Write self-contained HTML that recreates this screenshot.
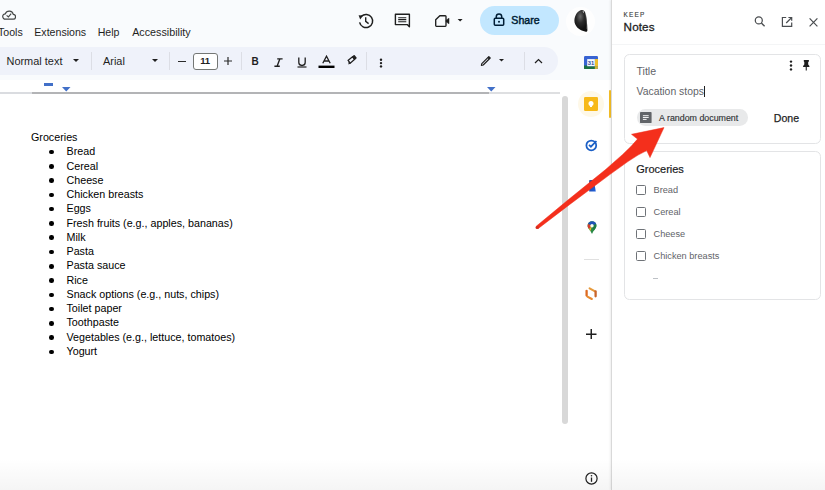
<!DOCTYPE html>
<html><head><meta charset="utf-8">
<style>
*{margin:0;padding:0;box-sizing:border-box}
html,body{width:825px;height:490px;overflow:hidden;background:#fff;font-family:"Liberation Sans",sans-serif;color:#1f1f1f}
.a{position:absolute}
#hdr{left:0;top:0;width:612px;height:80px;background:#f9fbfd}
#pill{left:-20px;top:47px;width:578px;height:28px;border-radius:14px;background:#eff2fa}
.menu{top:26px;font-size:10.6px;color:#1f1f1f;white-space:nowrap}
.tb{font-size:10.95px;color:#1f1f1f;white-space:nowrap}
.sep{width:1px;background:#dcdee5}
.doc{font-size:10.72px;color:#000;white-space:nowrap;line-height:14.27px}
.bul{width:4.6px;height:4.6px;border-radius:50%;background:#000}
#strip{left:570px;top:0;width:42px;height:490px}
#panel{left:611px;top:0;width:214px;height:490px;background:#fff;border-left:1px solid #d9d9d9;box-shadow:-1.5px 0 2px rgba(0,0,0,0.07)}
.card{border:1px solid #e3e4e6;border-radius:5.5px;background:#fff}
.ck{width:10px;height:10px;border:1.3px solid #6f7378;border-radius:1.5px}
.it{font-size:9.2px;color:#5f6368;white-space:nowrap}
</style></head><body>
<div class="a" id="hdr"></div>
<div class="a" id="pill"></div>

<!-- cloud icon -->
<svg class="a" style="left:2px;top:10px" width="14" height="10" viewBox="0 0 14 10">
<path d="M3.5 9.2 H11 A2.4 2.4 0 0 0 11.3 4.4 A4.2 4.2 0 0 0 3.3 3.8 A2.7 2.7 0 0 0 3.5 9.2 Z" fill="none" stroke="#444746" stroke-width="1.2"/>
<path d="M4.6 5.4 L6.4 6.9 L9.2 3.6" fill="none" stroke="#444746" stroke-width="1.15"/>
</svg>

<div class="a menu" style="left:-2px">Tools</div>
<div class="a menu" style="left:34.3px">Extensions</div>
<div class="a menu" style="left:97.7px">Help</div>
<div class="a menu" style="left:132.2px;font-size:10.75px">Accessibility</div>

<!-- header icons -->
<svg class="a" style="left:356px;top:11px" width="20" height="20" viewBox="0 0 20 20">
<path d="M3.6 11.4 A6.6 6.6 0 1 0 5.4 5.3" fill="none" stroke="#1f1f1f" stroke-width="1.5"/>
<path d="M2.6 4.2 L7.2 4.6 L4.2 8.4 Z" fill="#1f1f1f"/>
<path d="M9.7 6.2 V10.4 L12.6 12.6" fill="none" stroke="#1f1f1f" stroke-width="1.4"/>
</svg>
<svg class="a" style="left:394px;top:13px" width="17" height="16" viewBox="0 0 17 16">
<path d="M1.4 1.2 H15.4 V13.8 L13.2 11.6 H1.4 Z" fill="none" stroke="#1f1f1f" stroke-width="1.4" stroke-linejoin="round"/>
<path d="M4.2 4.7 H12.3 M4.2 6.6 H12.3 M4.2 8.8 H12.3" stroke="#1f1f1f" stroke-width="1.05"/>
</svg>
<svg class="a" style="left:433px;top:13px" width="32" height="16" viewBox="0 0 32 16">
<path d="M6.8 2.7 H12.3 A0.7 0.7 0 0 1 13 3.4 V12.6 A0.7 0.7 0 0 1 12.3 13.3 H3.4 A0.7 0.7 0 0 1 2.7 12.6 V6.8 Z" fill="none" stroke="#1f1f1f" stroke-width="1.35" stroke-linejoin="round"/>
<path d="M13 7.2 L16 5.2 V10.8 L13 8.8 Z" fill="#1f1f1f" stroke="#1f1f1f" stroke-width="0.5" stroke-linejoin="round"/>
<path d="M24.6 6 H29.6 L27.1 8.4 Z" fill="#1f1f1f"/>
</svg>

<!-- share -->
<div class="a" style="left:480px;top:6px;width:79px;height:29px;border-radius:15px;background:#c2e7ff"></div>
<svg class="a" style="left:493px;top:13px" width="12" height="13" viewBox="0 0 12 13">
<rect x="1.3" y="5.2" width="9.4" height="7" rx="1" fill="none" stroke="#001d35" stroke-width="1.5"/>
<path d="M3.3 5.2 V3.6 A2.7 2.7 0 0 1 8.7 3.6 V5.2" fill="none" stroke="#001d35" stroke-width="1.5"/>
<circle cx="6" cy="8.7" r="1" fill="#001d35"/>
</svg>
<div class="a" style="left:511.3px;top:13.6px;font-size:10.6px;-webkit-text-stroke:0.45px #001d35;color:#001d35;letter-spacing:0.05px">Share</div>

<!-- avatar -->
<div class="a" style="left:566px;top:7px;width:29px;height:29px;border-radius:50%;background:#fefefe"></div>
<svg class="a" style="left:572.5px;top:9px" width="16" height="25" viewBox="0 0 16 25">
<defs><radialGradient id="av" cx="0.45" cy="0.3" r="0.6"><stop offset="0" stop-color="#6a6a6a"/><stop offset="0.5" stop-color="#2a2a2a"/><stop offset="1" stop-color="#111"/></radialGradient></defs>
<path d="M9 0.9 C10.6 0.9 11.6 1.8 12.2 3.6 C13.4 8 14.2 14 14.4 20.8 C14.5 22.4 13.8 23 12.8 22.8 C6 21.6 1.3 17 1.4 11.6 C1.5 6.2 5 1 9 0.9 Z" fill="url(#av)"/>
<path d="M9.6 1.8 C10.6 2 11.2 3 11 4.2 C10.2 4 9.6 3 9.6 1.8Z" fill="#bdbdbd"/>
<path d="M12.6 6 C13.4 10 13.8 15 13.6 20" fill="none" stroke="#555" stroke-width="0.6"/>
</svg>

<!-- toolbar -->
<div class="a tb" style="left:6.5px;top:54.5px">Normal text</div>
<svg class="a" style="left:73.2px;top:59px" width="6" height="3"><path d="M0 0 H6 L3 3Z" fill="#1f1f1f"/></svg>
<div class="a sep" style="left:91px;top:52px;height:18px"></div>
<div class="a tb" style="left:103px;top:54.5px">Arial</div>
<svg class="a" style="left:151.8px;top:59px" width="6" height="3"><path d="M0 0 H6 L3 3Z" fill="#1f1f1f"/></svg>
<div class="a sep" style="left:169px;top:52px;height:18px"></div>
<div class="a" style="left:177.5px;top:60.5px;width:8px;height:1.2px;background:#2b2b2b"></div>
<div class="a" style="left:192.5px;top:52.5px;width:25px;height:17px;border:1px solid #747775;border-radius:3px;background:#fff"></div>
<div class="a tb" style="left:192.5px;top:55px;width:25px;text-align:center;font-size:9.6px;font-weight:bold;letter-spacing:-0.3px">11</div>
<svg class="a" style="left:224px;top:57px" width="8" height="8"><path d="M4 0V8M0 4H8" stroke="#2b2b2b" stroke-width="1.2"/></svg>
<div class="a sep" style="left:240.5px;top:52px;height:18px"></div>
<div class="a tb" style="left:251.6px;top:56.4px;font-weight:bold;font-size:10px">B</div>
<svg class="a" style="left:274px;top:57.5px" width="9" height="9" viewBox="0 0 9 9"><path d="M3.2 0.8H8.6M0.4 8.2H5.8M5.9 0.8L3.1 8.2" stroke="#1f1f1f" stroke-width="1.35"/></svg>
<svg class="a" style="left:297px;top:57px" width="10" height="11" viewBox="0 0 10 11"><path d="M1.8 0.5V5.3A3.2 3.2 0 0 0 8.2 5.3V0.5" fill="none" stroke="#1f1f1f" stroke-width="1.3"/><path d="M0.5 10H9.5" stroke="#1f1f1f" stroke-width="1.2"/></svg>
<svg class="a" style="left:318px;top:55px" width="17" height="13" viewBox="0 0 17 13"><path d="M4.8 8.2L8.5 1.2L12.2 8.2M6 6H11" fill="none" stroke="#1f1f1f" stroke-width="1.3"/><rect x="0.5" y="10.6" width="16" height="2.4" fill="#000"/></svg>
<svg class="a" style="left:345px;top:53px" width="14" height="13" viewBox="0 0 14 13"><g transform="translate(2.2,10.4) rotate(-40)"><rect x="2.6" y="-1.7" width="5.6" height="3.4" fill="none" stroke="#1f1f1f" stroke-width="1.2"/><rect x="7.8" y="-2.2" width="3.2" height="4.4" rx="0.8" fill="#1f1f1f"/><path d="M0.2 1.7 L2.6 -1 L2.6 2.2 Z" fill="#1f1f1f"/></g></svg>
<div class="a sep" style="left:366px;top:52px;height:18px"></div>
<svg class="a" style="left:379px;top:57.5px" width="4" height="10"><circle cx="2" cy="1.8" r="1.2" fill="#1f1f1f"/><circle cx="2" cy="5.1" r="1.2" fill="#1f1f1f"/><circle cx="2" cy="8.4" r="1.2" fill="#1f1f1f"/></svg>
<svg class="a" style="left:480px;top:55px" width="12" height="12" viewBox="0 0 12 12"><path d="M1.4 10.4 L1.8 8.6 L8.8 1.6 L10.2 3 L3.2 10 Z" fill="none" stroke="#1f1f1f" stroke-width="1.2" stroke-linejoin="round"/><path d="M8 2.4 L9.4 3.8" stroke="#1f1f1f" stroke-width="1.6"/></svg>
<svg class="a" style="left:499px;top:59.4px" width="5" height="3"><path d="M0 0 H5 L2.5 2.5Z" fill="#1f1f1f"/></svg>
<div class="a sep" style="left:524px;top:52px;height:18px"></div>
<svg class="a" style="left:534px;top:58px" width="9" height="6" viewBox="0 0 9 6"><path d="M1 5 L4.5 1.6 L8 5" fill="none" stroke="#1f1f1f" stroke-width="1.25"/></svg>

<!-- ruler -->
<div class="a" style="left:0;top:92px;width:32px;height:2px;background:#dadce0"></div>
<div class="a" style="left:32px;top:92px;width:456.5px;height:2px;background:#b3b4b6"></div>
<div class="a" style="left:488.5px;top:92px;width:71.5px;height:2px;background:#dedfe1"></div>
<div class="a" style="left:44px;top:83px;width:9px;height:3px;background:#4270c8"></div>
<svg class="a" style="left:62px;top:86.5px" width="9" height="5"><path d="M0 0H8.5L4.25 4.5Z" fill="#4270c8"/></svg>
<svg class="a" style="left:487px;top:86.5px" width="9" height="5"><path d="M0 0H8.5L4.25 4.5Z" fill="#4270c8"/></svg>

<!-- scrollbar -->
<div class="a" style="left:561.8px;top:96px;width:6px;height:328px;border-radius:3px;background:#d8d8d8"></div>

<!-- doc text -->
<div class="a doc" style="left:31px;top:130px">Groceries</div>
<div class="a" style="left:66.5px;top:144.3px">
<div class="doc">Bread</div>
<div class="doc">Cereal</div>
<div class="doc">Cheese</div>
<div class="doc">Chicken breasts</div>
<div class="doc">Eggs</div>
<div class="doc">Fresh fruits (e.g., apples, bananas)</div>
<div class="doc">Milk</div>
<div class="doc">Pasta</div>
<div class="doc">Pasta sauce</div>
<div class="doc">Rice</div>
<div class="doc">Snack options (e.g., nuts, chips)</div>
<div class="doc">Toilet paper</div>
<div class="doc">Toothpaste</div>
<div class="doc">Vegetables (e.g., lettuce, tomatoes)</div>
<div class="doc">Yogurt</div>
</div>
<div class="a bul" style="left:49.4px;top:149.80px"></div>
<div class="a bul" style="left:49.4px;top:164.07px"></div>
<div class="a bul" style="left:49.4px;top:178.34px"></div>
<div class="a bul" style="left:49.4px;top:192.61px"></div>
<div class="a bul" style="left:49.4px;top:206.88px"></div>
<div class="a bul" style="left:49.4px;top:221.15px"></div>
<div class="a bul" style="left:49.4px;top:235.42px"></div>
<div class="a bul" style="left:49.4px;top:249.69px"></div>
<div class="a bul" style="left:49.4px;top:263.96px"></div>
<div class="a bul" style="left:49.4px;top:278.23px"></div>
<div class="a bul" style="left:49.4px;top:292.50px"></div>
<div class="a bul" style="left:49.4px;top:306.77px"></div>
<div class="a bul" style="left:49.4px;top:321.04px"></div>
<div class="a bul" style="left:49.4px;top:335.31px"></div>
<div class="a bul" style="left:49.4px;top:349.58px"></div>


<!-- side strip icons -->
<svg class="a" style="left:584px;top:55.8px" width="14" height="13.2" viewBox="0 0 14 13.2">
<rect x="0" y="0" width="14" height="13.2" rx="1.2" fill="#3863d2"/>
<path d="M0 9.4 H3.2 V10.2 H11.2 V13.2 H1.2 Q0 13.2 0 12 Z" fill="#1d7040"/>
<rect x="10.8" y="3" width="3.2" height="7.4" fill="#efc02e"/>
<path d="M10.8 10.2 H14 V11.6 Q14 13.2 12.4 13.2 H10.8 Z" fill="#c9b33a"/>
<rect x="3.2" y="3.1" width="7.6" height="7.1" fill="#f5fbff"/>
<text x="7" y="9.1" font-size="5.8" text-anchor="middle" fill="#2b4a9a" font-family="Liberation Sans" font-weight="bold">31</text>
</svg>
<div class="a" style="left:578px;top:90.5px;width:26px;height:26px;border-radius:50%;background:#fef8e8"></div>
<svg class="a" style="left:584.2px;top:96.6px" width="14" height="14" viewBox="0 0 14 14">
<rect width="14" height="14" rx="1.2" fill="#f7b918"/>
<circle cx="7" cy="6.5" r="2.5" fill="#fff"/>
<rect x="6" y="8.4" width="2" height="1.6" fill="#fff"/>
</svg>
<div class="a" style="left:608.5px;top:90px;width:2.5px;height:28px;background:#f6bf26;border-radius:1px"></div>
<svg class="a" style="left:584px;top:138px" width="15" height="14" viewBox="0 0 15 14">
<circle cx="7.3" cy="7.4" r="4.9" fill="none" stroke="#1b5fc6" stroke-width="1.75"/>
<path d="M5 6.9 L6.9 8.7 L12.4 3" fill="none" stroke="#1b5fc6" stroke-width="1.8"/>
</svg>
<svg class="a" style="left:584px;top:178px" width="14" height="15" viewBox="0 0 14 15">
<defs><linearGradient id="ct" x1="0" y1="0" x2="1" y2="1"><stop offset="0" stop-color="#243f8f"/><stop offset="1" stop-color="#1f62e0"/></linearGradient></defs>
<path d="M5.2 2.2 Q7.5 1.6 9.8 2.2 L11.8 13.5 H5.2 Z" fill="url(#ct)"/>
</svg>
<svg class="a" style="left:586.5px;top:221px" width="10" height="13" viewBox="0 0 10 13">
<path d="M5 0.3 C7.7 0.3 9.4 2.2 9.4 4.7 C9.4 7.4 6.4 9.4 5.4 12.4 L4.6 12.4 C3.6 9.4 0.6 7.4 0.6 4.7 C0.6 2.2 2.3 0.3 5 0.3 Z" fill="#2a8a45"/>
<path d="M1 3 C1.8 1.2 3.3 0.3 5 0.3 C7 0.3 8.6 1.4 9.2 3 L5 4.7 Z" fill="#2152b8"/>
<path d="M0.6 4.7 C0.6 3.8 0.8 3.3 1 3 L5 4.7 L2 8 C1.2 7 0.6 5.9 0.6 4.7Z" fill="#d63c2c"/>
<path d="M2 8 L5 4.7 L3.6 10 Z" fill="#e6b32a"/>
<path d="M9.2 3 C9.4 3.6 9.4 4 9.4 4.7 C9.4 6.5 8 8 6.8 9.4 L5 4.7 Z" fill="#1f7a44"/>
<circle cx="5" cy="4.7" r="1.7" fill="#f6ffef"/>
</svg>
<div class="a" style="left:584px;top:259px;width:15px;height:1px;background:#e0e0e0"></div>
<svg class="a" style="left:583px;top:285px" width="16" height="17" viewBox="583 285 16 17">
<path d="M589.6 288.3 L594.6 291.2" stroke="#e79a3c" stroke-width="2.1" stroke-linecap="round"/>
<path d="M595.6 291.4 V296.3" stroke="#c9652a" stroke-width="2.3" stroke-linecap="round"/>
<path d="M586.6 290.8 V295.6" stroke="#dc6a22" stroke-width="2.3" stroke-linecap="round"/>
<path d="M587.4 296.6 L591.8 299" stroke="#e88a2e" stroke-width="2.1" stroke-linecap="round"/>
</svg>
<svg class="a" style="left:586px;top:328.5px" width="10.5" height="10.5" viewBox="0 0 10 10"><path d="M5 0V10M0 5H10" stroke="#1f1f1f" stroke-width="1.4"/></svg>
<svg class="a" style="left:584.5px;top:471.5px" width="13" height="13" viewBox="0 0 13 13"><circle cx="6.5" cy="6.5" r="5.6" fill="none" stroke="#1f1f1f" stroke-width="1.2"/><path d="M6.5 5.5V9.8" stroke="#1f1f1f" stroke-width="1.3"/><circle cx="6.5" cy="3.7" r="0.8" fill="#1f1f1f"/></svg>

<!-- keep panel -->
<div class="a" id="panel"></div>
<div class="a" style="left:623.5px;top:10.8px;font-size:6.4px;letter-spacing:1.2px;color:#3c3f41;-webkit-text-stroke:0.15px #3c3f41">KEEP</div>
<div class="a" style="left:623.6px;top:19.5px;font-size:11.7px;letter-spacing:0.1px;-webkit-text-stroke:0.3px #1f1f1f;color:#1f1f1f">Notes</div>
<svg class="a" style="left:754px;top:16px" width="12" height="12" viewBox="0 0 12 12"><circle cx="4.8" cy="4.4" r="3.5" fill="none" stroke="#4a4d50" stroke-width="1.25"/><path d="M7.4 7L10.6 10.3" stroke="#4a4d50" stroke-width="1.35"/></svg>
<svg class="a" style="left:781px;top:16px" width="12" height="12" viewBox="0 0 12 12"><path d="M5.2 1.5H1.4V10.3H10.7V6.6" fill="none" stroke="#4a4d50" stroke-width="1.2"/><path d="M7.4 1.5H10.7V4.8M10.7 1.5L5.2 7" fill="none" stroke="#4a4d50" stroke-width="1.2"/></svg>
<svg class="a" style="left:808.5px;top:17.5px" width="9" height="9" viewBox="0 0 9 9"><path d="M0.6 0.4L8.4 8.3M8.4 0.4L0.6 8.3" stroke="#4a4d50" stroke-width="1.2"/></svg>
<div class="a" style="left:612px;top:44px;width:213px;height:1px;background:#f4f5f6"></div>

<div class="a card" style="left:623.5px;top:53.5px;width:197.5px;height:90.5px"></div>
<div class="a" style="left:636.5px;top:65px;font-size:10.6px;color:#5f6368">Title</div>
<div class="a" style="left:636.5px;top:85.6px;font-size:10.4px;color:#5f6368">Vacation stops</div>
<div class="a" style="left:704px;top:86px;width:1px;height:11px;background:#1f1f1f"></div>
<svg class="a" style="left:788.5px;top:60px" width="4" height="11"><circle cx="2" cy="1.6" r="1.2" fill="#1f1f1f"/><circle cx="2" cy="5.5" r="1.2" fill="#1f1f1f"/><circle cx="2" cy="9.4" r="1.2" fill="#1f1f1f"/></svg>
<svg class="a" style="left:801.5px;top:60.3px" width="9" height="11" viewBox="0 0 9 11"><path d="M1.8 0 H6.9 V1.5 L6.2 2 V4.6 L7.4 6 V7 H1.1 V6 L2.3 4.6 V2 L1.8 1.5 Z" fill="#1f1f1f"/><path d="M4.25 7 V10.4" stroke="#1f1f1f" stroke-width="1.1"/></svg>
<div class="a" style="left:636.8px;top:109px;width:111.2px;height:16.6px;border-radius:8.3px;background:#e8e9ea"></div>
<svg class="a" style="left:640.2px;top:112px" width="11.6" height="11.1" viewBox="0 0 11.6 11.1"><rect width="11.6" height="11.1" rx="0.8" fill="#616468"/><path d="M2.9 3.7H8.7M2.9 5.5H8.7M2.9 7.4H6.6" stroke="#f4f4f4" stroke-width="1"/></svg>
<div class="a" style="left:659.1px;top:112.5px;font-size:8.85px;color:#303336;-webkit-text-stroke:0.15px #303336">A random document</div>
<div class="a" style="left:773.8px;top:111.5px;font-size:10.6px;-webkit-text-stroke:0.25px #1f1f1f;color:#1f1f1f">Done</div>

<div class="a card" style="left:624px;top:151px;width:196.5px;height:149px"></div>
<div class="a" style="left:636.2px;top:163.6px;font-size:11px;-webkit-text-stroke:0.2px #202124;color:#202124;margin-top:-0.7px">Groceries</div>
<div class="a ck" style="left:636.2px;top:185px"></div>
<div class="a it" style="left:653.5px;top:184.5px">Bread</div>
<div class="a ck" style="left:636.2px;top:207px"></div>
<div class="a it" style="left:653.5px;top:206.5px">Cereal</div>
<div class="a ck" style="left:636.2px;top:229px"></div>
<div class="a it" style="left:653.5px;top:228.5px">Cheese</div>
<div class="a ck" style="left:636.2px;top:251px"></div>
<div class="a it" style="left:653.5px;top:250.5px">Chicken breasts</div>
<div class="a" style="left:652.5px;top:278px;width:5.5px;height:1px;background:#bdc1c6"></div>

<!-- red arrow -->
<svg class="a" style="left:0;top:0" width="825" height="490" viewBox="0 0 825 490">
<path d="M536.2 226.3 L567.0 200.8 L605.9 169.3 L622.4 154.7 L631.1 146.3 L637.5 139.1 L631.5 134.3 L664.0 127.6 L650.0 157.6 L646.7 150.6 L638.0 155.1 L627.9 161.6 L609.8 174.6 L570.1 204.2 L538.0 228.7 Z" fill="#f42f1c" stroke="#ee2c1b" stroke-width="0.5" stroke-linejoin="round"/>
<circle cx="537.1" cy="227.5" r="1.55" fill="#d42a1c"/>
</svg>
<div class="a" style="left:0;top:458px;width:825px;height:32px;background:linear-gradient(rgba(0,0,0,0),rgba(0,0,0,0.018) 50%,rgba(0,0,0,0.04))"></div>
</body></html>
